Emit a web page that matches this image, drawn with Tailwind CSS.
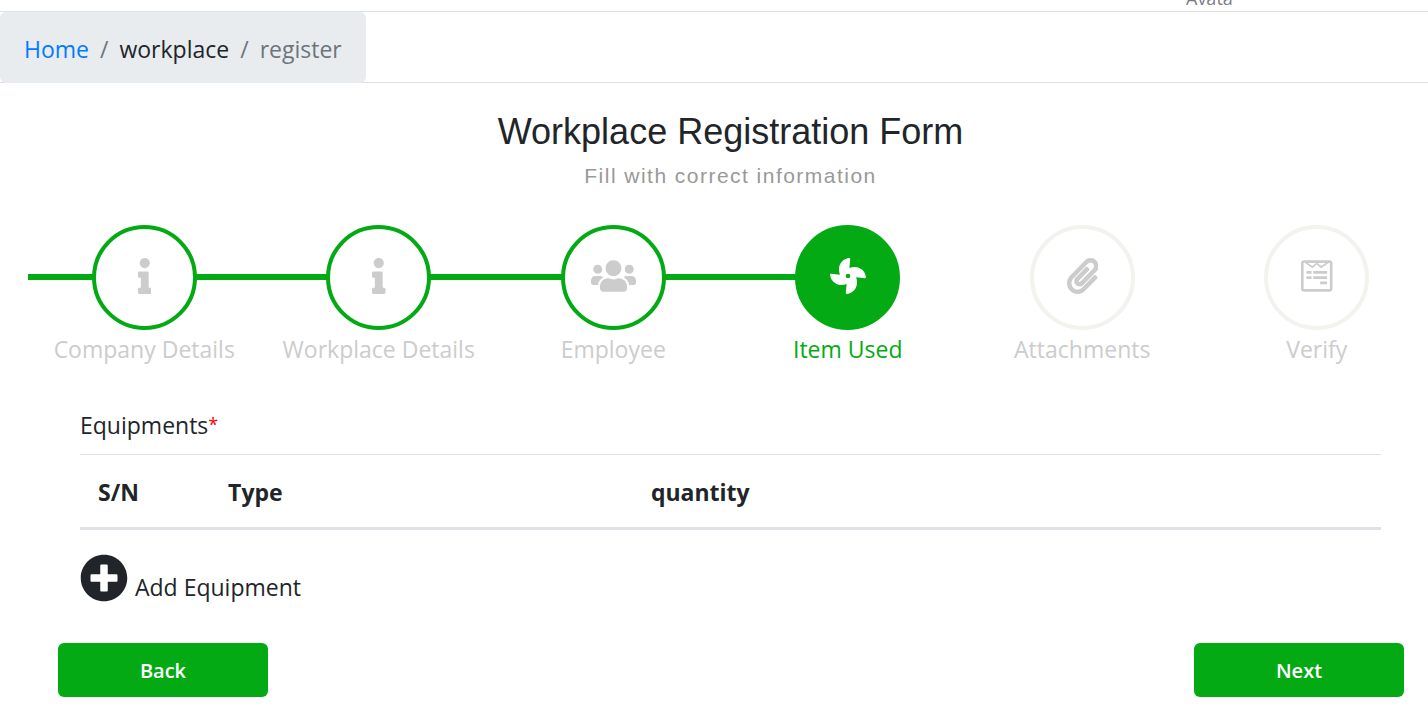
<!DOCTYPE html>
<html lang="en">
<head>
  <meta charset="UTF-8">
  <meta name="viewport" content="width=device-width, initial-scale=1.0">
  <title>Workplace Registration Form</title>
  <script src="https://cdn.jsdelivr.net/npm/@tailwindcss/browser@4"></script>
</head>
<body class="bg-white text-[#212529] font-['Open_Sans','Noto_Sans',sans-serif] text-[23px] leading-9 overflow-x-hidden">

  <!-- Top bar, scrolled almost out of view -->
  <header class="h-3 border-b border-[#dee2e6] flex items-end justify-end pr-[194px]">
    <div class="w-12 h-[11px] overflow-hidden flex items-end pb-[5px] text-[#7d7b8a]">
      <span class="block h-[6px] w-12 overflow-hidden"><span class="block -mt-5 text-lg leading-9">Avatar</span></span>
    </div>
  </header>

  <!-- Breadcrumb -->
  <nav aria-label="breadcrumb" class="flex border-b border-[#dcdce4]">
    <ol class="flex gap-[11px] bg-[#e9ecef] rounded-md px-6 pt-[19px] pb-4 -mb-px">
      <li><a href="#" class="text-[#007bff] hover:underline">Home</a></li>
      <li class="text-[#6c757d]">/</li>
      <li><a href="#" class="hover:underline">workplace</a></li>
      <li class="text-[#6c757d]">/</li>
      <li class="text-[#6c757d]">register</li>
    </ol>
  </nav>

  <main class="ml-7 -mr-[5px] pt-[27px]">
    <h1 class="font-['Liberation_Sans',sans-serif] text-4xl leading-[44px] text-center">Workplace Registration Form</h1>
    <p class="font-['Liberation_Sans',sans-serif] text-[21px] leading-8 tracking-[0.07em] text-center text-[#999] mt-[6px]">Fill with correct information</p>

    <!-- Steps -->
    <div class="relative mt-[33px]">
      <div class="absolute left-0 top-[49px] h-[6px] w-7/12 bg-[#03aa14]"></div>
      <ol class="relative -mx-px grid grid-cols-6 text-center text-[#ccc]">
        <li class="flex flex-col items-center">
          <span class="flex items-center justify-center pb-[3px] size-[105px] rounded-full border-4 border-[#03aa14] bg-white">
            <svg class="h-9" viewBox="0 0 192 512" fill="currentColor"><path d="M20 424.229h20V279.771H20c-11.046 0-20-8.954-20-20V212c0-11.046 8.954-20 20-20h112c11.046 0 20 8.954 20 20v212.229h20c11.046 0 20 8.954 20 20V492c0 11.046-8.954 20-20 20H20c-11.046 0-20-8.954-20-20v-47.771c0-11.046 8.954-20 20-20zM96 0C56.235 0 24 32.235 24 72s32.235 72 72 72 72-32.235 72-72S135.764 0 96 0z"/></svg>
          </span>
          <span class="mt-px">Company Details</span>
        </li>
        <li class="flex flex-col items-center">
          <span class="flex items-center justify-center pb-[3px] size-[105px] rounded-full border-4 border-[#03aa14] bg-white">
            <svg class="h-9" viewBox="0 0 192 512" fill="currentColor"><path d="M20 424.229h20V279.771H20c-11.046 0-20-8.954-20-20V212c0-11.046 8.954-20 20-20h112c11.046 0 20 8.954 20 20v212.229h20c11.046 0 20 8.954 20 20V492c0 11.046-8.954 20-20 20H20c-11.046 0-20-8.954-20-20v-47.771c0-11.046 8.954-20 20-20zM96 0C56.235 0 24 32.235 24 72s32.235 72 72 72 72-32.235 72-72S135.764 0 96 0z"/></svg>
          </span>
          <span class="mt-px">Workplace Details</span>
        </li>
        <li class="flex flex-col items-center">
          <span class="flex items-center justify-center pb-[3px] size-[105px] rounded-full border-4 border-[#03aa14] bg-white">
            <svg class="h-9" viewBox="0 0 640 512" fill="currentColor"><path d="M96 224c35.3 0 64-28.7 64-64s-28.7-64-64-64-64 28.7-64 64 28.7 64 64 64zm448 0c35.3 0 64-28.7 64-64s-28.7-64-64-64-64 28.7-64 64 28.7 64 64 64zm32 32h-64c-17.6 0-33.5 7.1-45.1 18.6 40.3 22.1 68.9 62 75.1 109.4h66c17.7 0 32-14.3 32-32v-32c0-35.3-28.7-64-64-64zm-256 0c61.9 0 112-50.1 112-112S381.9 32 320 32 208 82.1 208 144s50.1 112 112 112zm76.8 32h-8.3c-20.8 10-43.9 16-68.5 16s-47.6-6-68.5-16h-8.3C179.6 288 128 339.6 128 403.2V432c0 26.5 21.5 48 48 48h288c26.5 0 48-21.5 48-48v-28.8c0-63.6-51.6-115.2-115.2-115.2zm-223.7-13.4C161.5 263.1 145.6 256 128 256H64c-35.3 0-64 28.7-64 64v32c0 17.7 14.3 32 32 32h65.9c6.3-47.4 34.9-87.3 75.2-109.4z"/></svg>
          </span>
          <span class="mt-px">Employee</span>
        </li>
        <li class="flex flex-col items-center" aria-current="step">
          <span class="flex items-center justify-center pb-[3px] size-[105px] rounded-full border-4 border-[#03aa14] bg-[#03aa14] text-white">
            <svg class="h-9" viewBox="0 0 512 512" fill="currentColor"><path d="M352.57 128c-28.09 0-54.09 4.52-77.06 12.86l12.41-123.11C289 7.31 279.81-1.18 269.33.13 189.63 10.13 128 77.64 128 159.43c0 28.09 4.52 54.09 12.86 77.06L17.75 224.08C7.31 223-1.18 232.19.13 242.67c10 79.7 77.51 141.33 159.3 141.33 28.09 0 54.09-4.52 77.06-12.86l-12.41 123.11c-1.05 10.43 8.11 18.93 18.59 17.62 79.7-10 141.33-77.51 141.33-159.3 0-28.09-4.52-54.09-12.86-77.06l123.11 12.41c10.44 1.05 18.93-8.11 17.62-18.59-10-79.7-77.51-141.33-159.3-141.33zM256 288a32 32 0 1 1 32-32 32 32 0 0 1-32 32z"/></svg>
          </span>
          <span class="mt-px text-[#03aa14]">Item Used</span>
        </li>
        <li class="flex flex-col items-center">
          <span class="flex items-center justify-center pb-[3px] size-[105px] rounded-full border-4 border-[#f3f2ee] bg-white">
            <svg class="h-9" viewBox="0 0 448 512" fill="currentColor"><path d="M43.246 466.142c-58.43-60.289-57.341-157.511 1.386-217.581L254.392 34c44.316-45.332 116.351-45.336 160.671 0 43.89 44.894 43.943 117.329 0 162.276L232.214 383.128c-29.855 30.537-78.633 30.111-107.982-.998-28.275-29.97-27.368-77.473 1.452-106.953l143.743-146.835c6.182-6.314 16.312-6.422 22.626-.241l22.861 22.379c6.315 6.182 6.422 16.312.241 22.626L171.427 319.927c-4.932 5.045-5.236 13.428-.648 18.292 4.372 4.634 11.245 4.711 15.688.165l182.849-186.851c19.613-20.062 19.613-52.725-.011-72.798-19.189-19.627-49.957-19.637-69.154 0L90.39 293.295c-34.763 35.56-35.299 93.12-1.191 128.313 34.01 35.093 88.985 35.137 123.058.286l172.06-175.999c6.177-6.319 16.307-6.433 22.626-.256l22.877 22.364c6.319 6.177 6.434 16.307.256 22.626l-172.06 175.998c-59.576 60.938-155.943 60.216-214.77-.485z"/></svg>
          </span>
          <span class="mt-px">Attachments</span>
        </li>
        <li class="flex flex-col items-center">
          <span class="flex items-center justify-center pb-[3px] size-[105px] rounded-full border-4 border-[#f3f2ee] bg-white">
            <svg class="h-9" viewBox="0 0 448 512" fill="currentColor"><path d="M448 75.2v361.7c0 24.3-19 43.2-43.2 43.2H43.2C19.3 480 0 461.4 0 436.8V75.2C0 51.1 18.8 32 43.2 32h361.7c24 0 43.1 18.8 43.1 43.2zm-37.3 361.6V75.2c0-3-2.6-5.8-5.8-5.8h-9.3L285.3 144 224 94.1 162.8 144 52.5 69.3h-9.3c-3.2 0-5.8 2.8-5.8 5.8v361.7c0 3 2.6 5.8 5.8 5.8h361.7c3.2.1 5.8-2.7 5.8-5.8zM150.2 186v37H76.7v-37h73.5zm0 74.4v37.3H76.7v-37.3h73.5zm11.1-147.3l54-43.7H96.8l64.5 43.7zm210 72.9v37h-196v-37h196zm0 74.4v37.3h-196v-37.3h196zm-84.6-147.3l64.5-43.7H232.8l53.9 43.7zM371.3 335v37.3h-99.4V335h99.4z"/></svg>
          </span>
          <span class="mt-px">Verify</span>
        </li>
      </ol>
    </div>

    <!-- Equipments -->
    <section class="mx-[52px] mt-10">
      <h2 id="equipments">Equipments<span class="text-lg leading-none text-[#ff0000] align-[3px]">*</span></h2>
      <table aria-labelledby="equipments" class="w-full mt-[11px] table-fixed text-left">
        <thead>
          <tr class="border-t border-b-3 border-[#dee2e6]">
            <th class="w-[10%] px-[18px] pt-[19px] pb-[17px] font-bold">S/N</th>
            <th class="w-[32.5%] px-[18px] pt-[19px] pb-[17px] font-bold">Type</th>
            <th class="px-[18px] pt-[19px] pb-[17px] font-bold">quantity</th>
          </tr>
        </thead>
      </table>
      <button type="button" class="flex items-end gap-[7px] mt-6 cursor-pointer">
        <svg class="size-12" viewBox="0 0 512 512" fill="currentColor"><path d="M256 8C119 8 8 119 8 256s111 248 248 248 248-111 248-248S393 8 256 8zm144 276c0 6.6-5.4 12-12 12h-92v92c0 6.6-5.4 12-12 12h-56c-6.6 0-12-5.4-12-12v-92h-92c-6.6 0-12-5.4-12-12v-56c0-6.6 5.4-12 12-12h92v-92c0-6.6 5.4-12 12-12h56c6.6 0 12 5.4 12 12v92h92c6.6 0 12 5.4 12 12v56z"/></svg>
        <span class="-mb-[3px]">Add Equipment</span>
      </button>
    </section>

    <div class="flex justify-between pl-[30px] pr-[29px] mt-[41px] pb-6">
      <button type="button" class="w-[210px] h-[54px] pt-[2px] rounded-md bg-[#03aa14] text-white text-xl font-semibold cursor-pointer">Back</button>
      <button type="button" class="w-[210px] h-[54px] pt-[2px] rounded-md bg-[#03aa14] text-white text-xl font-semibold cursor-pointer">Next</button>
    </div>
  </main>
</body>
</html>
